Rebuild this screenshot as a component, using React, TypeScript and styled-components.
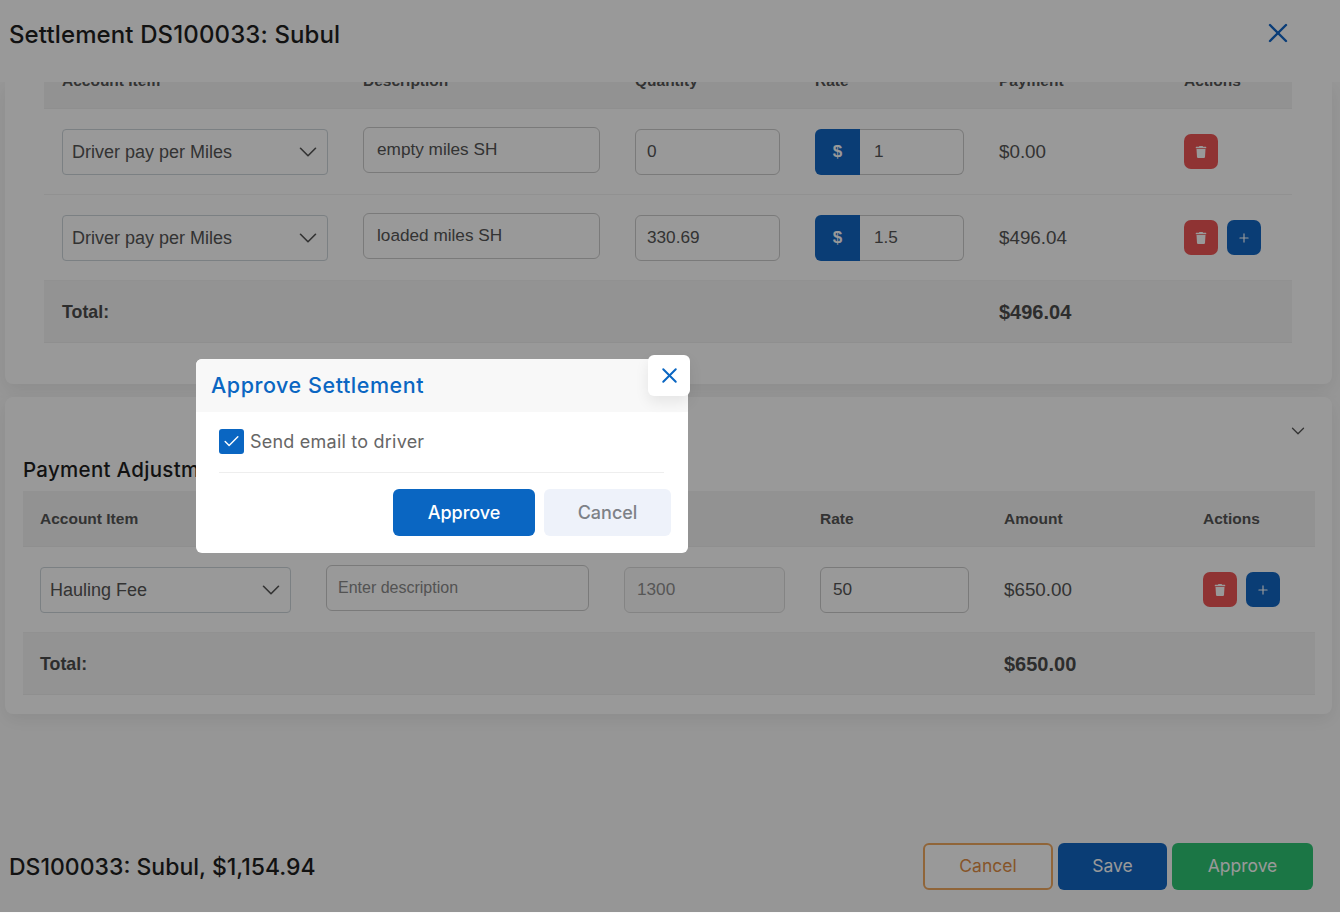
import React from "react";
import styled, { createGlobalStyle } from "styled-components";
import { Check, ChevronDown, Plus, X } from "lucide-react";
import { FaTrash } from "react-icons/fa";

const heading = `Inter, "Noto Sans", sans-serif`;
const body = `"Liberation Sans", Arial, sans-serif`;

const GlobalStyle = createGlobalStyle`
  html, body {
    margin: 0;
    height: 100%;
    background: #fbfbfb;
  }
  * {
    box-sizing: border-box;
  }
`;

type Line = {
  item: string;
  description: string;
  quantity: string;
  rate: string;
  payment: string;
  canAdd?: boolean;
};

const lines: Line[] = [
  { item: "Driver pay per Miles", description: "empty miles SH", quantity: "0", rate: "1", payment: "$0.00" },
  { item: "Driver pay per Miles", description: "loaded miles SH", quantity: "330.69", rate: "1.5", payment: "$496.04", canAdd: true },
];

const SelectBox: React.FC<{ value: string }> = ({ value }) => (
  <Select>
    <SelectValue>{value}</SelectValue>
    <ChevronDown size={30} strokeWidth={1.3} />
  </Select>
);

const RowActions: React.FC<{ canAdd?: boolean }> = ({ canAdd }) => (
  <Actions>
    <ActionButton $kind="delete" aria-label="Delete">
      <FaTrash size={12} />
    </ActionButton>
    {canAdd && (
      <ActionButton $kind="add" aria-label="Add">
        <Plus size={14} strokeWidth={2} />
      </ActionButton>
    )}
  </Actions>
);

export default function App() {
  return (
    <Page>
      <GlobalStyle />
      <Header>
        <Title>Settlement DS100033: Subul</Title>
        <HeaderClose aria-label="Close">
          <X size={32} strokeWidth={1.8} />
        </HeaderClose>
      </Header>

      <Content>
        <EarningsCard>
          <EarningsTable>
            <HeadRow $layout="earnings">
              <span>Account Item</span>
              <span>Description</span>
              <span>Quantity</span>
              <span>Rate</span>
              <span>Payment</span>
              <span>Actions</span>
            </HeadRow>
            {lines.map((line) => (
              <BodyRow $layout="earnings" key={line.description}>
                <SelectBox value={line.item} />
                <DescriptionInput readOnly value={line.description} />
                <QuantityInput readOnly value={line.quantity} />
                <RateGroup>
                  <RateAddon>$</RateAddon>
                  <RateInput readOnly value={line.rate} />
                </RateGroup>
                <Amount>{line.payment}</Amount>
                <RowActions canAdd={line.canAdd} />
              </BodyRow>
            ))}
            <TotalRow $layout="earnings">
              <span>Total:</span>
              <span />
              <span />
              <span />
              <TotalAmount>$496.04</TotalAmount>
            </TotalRow>
          </EarningsTable>
        </EarningsCard>

        <AdjustmentCard>
          <Collapse>
            <ChevronDown size={22} strokeWidth={1.4} />
          </Collapse>
          <SectionTitle>Payment Adjustments</SectionTitle>
          <div>
            <HeadRow $layout="adjustments">
              <span>Account Item</span>
              <span>Description</span>
              <span>Quantity</span>
              <span>Rate</span>
              <span>Amount</span>
              <span>Actions</span>
            </HeadRow>
            <BodyRow $layout="adjustments">
              <SelectBox value="Hauling Fee" />
              <PlaceholderInput readOnly placeholder="Enter description" />
              <DisabledInput readOnly value="1300" />
              <Input readOnly value="50" />
              <Amount>$650.00</Amount>
              <RowActions canAdd />
            </BodyRow>
            <TotalRow $layout="adjustments">
              <span>Total:</span>
              <span />
              <span />
              <span />
              <TotalAmount>$650.00</TotalAmount>
            </TotalRow>
          </div>
        </AdjustmentCard>
      </Content>

      <Footer>
        <Summary>DS100033: Subul, $1,154.94</Summary>
        <FooterButtons>
          <FooterCancel>Cancel</FooterCancel>
          <FooterSave>Save</FooterSave>
          <FooterApprove>Approve</FooterApprove>
        </FooterButtons>
      </Footer>

      <Overlay>
        <Modal>
          <ModalHeader>
            <ModalTitle>Approve Settlement</ModalTitle>
          </ModalHeader>
          <ModalClose aria-label="Close">
            <X size={25} strokeWidth={1.9} />
          </ModalClose>
          <ModalBody>
            <CheckRow>
              <CheckBox>
                <Check size={19} strokeWidth={1.8} />
              </CheckBox>
              Send email to driver
            </CheckRow>
            <ModalActions>
              <ModalApprove>Approve</ModalApprove>
              <ModalCancel>Cancel</ModalCancel>
            </ModalActions>
          </ModalBody>
        </Modal>
      </Overlay>
    </Page>
  );
}

const Page = styled.div`
  position: relative;
  display: flex;
  flex-direction: column;
  width: 1340px;
  height: 913px;
  overflow: hidden;
  background: #fbfbfb;
`;

const Header = styled.header`
  display: flex;
  flex: 0 0 82px;
  align-items: center;
  justify-content: space-between;
  padding: 0 46px 14px 9px;
  background: #ffffff;
  position: relative;
  z-index: 1;
`;

const Title = styled.h1`
  margin: 0;
  color: #1e1e1e;
  font-family: ${heading};
  font-size: 24px;
  font-weight: 500;
  letter-spacing: 0.12px;
`;

const HeaderClose = styled.button`
  display: flex;
  margin-bottom: 2px;
  padding: 0;
  border: 0;
  background: none;
  color: #1166c8;
`;

const Content = styled.main`
  display: flex;
  flex: 1;
  flex-direction: column;
  gap: 13px;
  padding: 0 8px 0 5px;
  overflow: hidden;
`;

const Card = styled.section`
  flex: none;
  background: #ffffff;
  border-radius: 8px;
  box-shadow: 0 6px 18px rgba(0, 0, 0, 0.07);
`;

const EarningsCard = styled(Card)`
  height: 302px;
  padding: 0 40px 0 39px;
  border-radius: 0 0 8px 8px;
`;

const EarningsTable = styled.div`
  margin-top: -29px;
`;

const AdjustmentCard = styled(Card)`
  display: flex;
  flex-direction: column;
  padding: 0 17px 19px 18px;
`;

const Collapse = styled.div`
  display: flex;
  justify-content: flex-end;
  height: 42px;
  margin-right: 6px;
  padding-top: 23px;
  color: #555555;
`;

const SectionTitle = styled.h2`
  margin: 20px 0 10px;
  color: #1e1e1e;
  font-family: ${heading};
  font-size: 20.5px;
  font-weight: 500;
  letter-spacing: 0.3px;
  line-height: 22px;
`;

const layouts = {
  earnings: "266px 237px 145px 149px 150px auto",
  adjustments: "251px 263px 161px 149px 164px auto",
};

type Layout = keyof typeof layouts;

const Row = styled.div<{ $layout: Layout }>`
  display: grid;
  grid-template-columns: ${(p) => layouts[p.$layout]};
  column-gap: 35px;
  align-items: center;
  padding-left: ${(p) => (p.$layout === "earnings" ? "18px" : "17px")};
  font-family: ${body};
`;

const HeadRow = styled(Row)`
  height: 56px;
  background: #f4f4f4;
  border-bottom: 1px solid #eeeeee;
  color: #555555;
  font-size: 15.5px;
  font-weight: 700;
`;

const BodyRow = styled(Row)`
  height: 86px;
  border-bottom: 1px solid #f2f2f2;
`;

const TotalRow = styled(Row)`
  height: 62px;
  padding-top: 2px;
  background: #f5f5f5;
  border-bottom: 1px solid #eeeeee;
  color: #4c4c4c;
  font-size: 17.8px;
  font-weight: 700;
`;

const TotalAmount = styled.span`
  font-size: 20px;
`;

const Select = styled.div`
  display: flex;
  align-items: center;
  justify-content: space-between;
  height: 46px;
  padding: 0 4px 0 9px;
  background: #ffffff;
  border: 1.5px solid #cdd5db;
  border-radius: 4px;
  color: #555555;
  font-family: ${body};
  font-size: 18px;
`;

const SelectValue = styled.span`
  padding-top: 2px;
`;

const Input = styled.input`
  width: 100%;
  height: 46px;
  padding: 0 12px;
  background: #ffffff;
  border: 1.5px solid #cccccc;
  border-radius: 6px;
  outline: none;
  color: #555555;
  font-family: ${body};
  font-size: 17.2px;
`;

const DescriptionInput = styled(Input)`
  margin-bottom: 4px;
  padding-left: 13px;
`;

const QuantityInput = styled(Input)`
  padding-left: 11px;
`;

const PlaceholderInput = styled(DescriptionInput)`
  padding-left: 11px;
  font-size: 16px;
  &::placeholder {
    color: #8a8a8a;
    opacity: 1;
  }
`;

const DisabledInput = styled(Input)`
  background: #fbfbfb;
  border-color: #dddddd;
  color: #8f8f8f;
`;

const RateGroup = styled.div`
  display: flex;
  height: 46px;
`;

const RateAddon = styled.span`
  display: flex;
  flex: 0 0 45px;
  align-items: center;
  justify-content: center;
  background: #1166c4;
  border-radius: 6px 0 0 6px;
  color: #ffffff;
  font-size: 17px;
  font-weight: 700;
`;

const RateInput = styled(Input)`
  padding-left: 14px;
  border-left: 0;
  border-radius: 0 6px 6px 0;
`;

const Amount = styled.span`
  color: #555555;
  font-size: 18.8px;
`;

const Actions = styled.div`
  display: flex;
  gap: 9px;
`;

const ActionButton = styled.button<{ $kind: "delete" | "add" }>`
  display: flex;
  align-items: center;
  justify-content: center;
  width: 34px;
  height: 35px;
  padding: 0;
  border: 0;
  border-radius: 7px;
  background: ${(p) => (p.$kind === "delete" ? "#ee5555" : "#1166c4")};
  color: #ffffff;
`;

const Footer = styled.footer`
  display: flex;
  flex: 0 0 93px;
  align-items: center;
  justify-content: space-between;
  padding: 0 27px 0 9px;
`;

const Summary = styled.div`
  color: #1e1e1e;
  font-family: ${heading};
  font-size: 23px;
  font-weight: 500;
`;

const FooterButtons = styled.div`
  display: flex;
  gap: 5px;
`;

const FooterButton = styled.button`
  height: 47px;
  padding: 0 0 2px;
  border: 0;
  border-radius: 6px;
  color: #ffffff;
  font-family: ${heading};
  font-size: 17.5px;
  font-weight: 400;
`;

const FooterCancel = styled(FooterButton)`
  width: 130px;
  background: #ffffff;
  border: 2px solid #f0a860;
  color: #e08d45;
`;

const FooterSave = styled(FooterButton)`
  width: 109px;
  background: #1166c4;
`;

const FooterApprove = styled(FooterButton)`
  width: 141px;
  background: #2dc574;
`;

const Overlay = styled.div`
  position: absolute;
  inset: 0 0 1px 0;
  z-index: 2;
  padding: 359px 0 0 196px;
  background: rgba(0, 0, 0, 0.4);
`;

const Modal = styled.div`
  position: relative;
  width: 492px;
  height: 194px;
  background: #ffffff;
  border-radius: 6px;
`;

const ModalHeader = styled.div`
  display: flex;
  align-items: center;
  height: 53px;
  padding: 0 0 2px 15px;
  background: #f8f8f8;
  border-radius: 6px 6px 0 0;
`;

const ModalTitle = styled.h3`
  margin: 0;
  color: #0a66c2;
  font-family: ${heading};
  font-size: 21.5px;
  font-weight: 500;
  letter-spacing: 0.55px;
`;

const ModalClose = styled.button`
  position: absolute;
  top: -4px;
  right: -2px;
  display: flex;
  align-items: center;
  justify-content: center;
  width: 42px;
  height: 41px;
  padding: 0;
  border: 0;
  border-radius: 6px;
  background: #ffffff;
  box-shadow: 0 6px 14px rgba(0, 0, 0, 0.08);
  color: #0a66c2;
`;

const ModalBody = styled.div`
  padding: 17px 17px 17px 23px;
`;

const CheckRow = styled.label`
  display: flex;
  align-items: center;
  gap: 6px;
  height: 44px;
  margin-right: 7px;
  padding-bottom: 19px;
  border-bottom: 1px solid #eeeeee;
  color: #666666;
  font-family: ${heading};
  font-size: 18px;
  letter-spacing: 0.22px;
`;

const CheckBox = styled.span`
  display: flex;
  align-items: center;
  justify-content: center;
  width: 25px;
  height: 25px;
  background: #0a66c2;
  border-radius: 3px;
  color: #ffffff;
`;

const ModalActions = styled.div`
  display: flex;
  justify-content: flex-end;
  gap: 9px;
  margin-top: 16px;
`;

const ModalButton = styled.button`
  height: 47px;
  padding: 0;
  border: 0;
  border-radius: 6px;
  font-family: ${heading};
  font-size: 18px;
  font-weight: 500;
`;

const ModalApprove = styled(ModalButton)`
  width: 142px;
  background: #0a66c2;
  color: #ffffff;
`;

const ModalCancel = styled(ModalButton)`
  width: 127px;
  background: #eef2fa;
  color: #7d8187;
`;
